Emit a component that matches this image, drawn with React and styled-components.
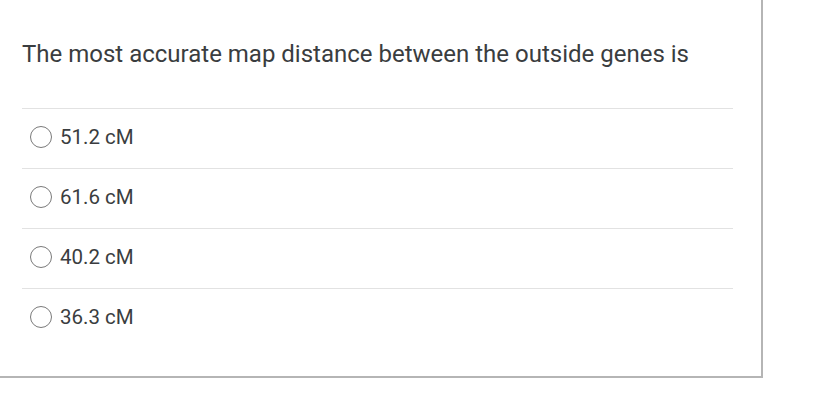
import styled, { createGlobalStyle } from "styled-components";

const GlobalStyle = createGlobalStyle`
  html, body {
    margin: 0;
    padding: 0;
    background: #ffffff;
  }
  body {
    font-family: Roboto, "Liberation Sans", Arial, sans-serif;
  }
`;

const Panel = styled.div`
  box-sizing: border-box;
  width: 763px;
  height: 378px;
  padding: 39px 28px 0 22px;
  background: #ffffff;
  border-right: 2px solid #b5b5b5;
  border-bottom: 2px solid #b5b5b5;
`;

const Question = styled.div`
  font-size: 24px;
  line-height: 30px;
  color: #3a3d40;
  margin-bottom: 39px;
`;

const Options = styled.div`
  display: flex;
  flex-direction: column;
`;

const Option = styled.label`
  display: flex;
  align-items: center;
  gap: 8px;
  height: 60px;
  box-sizing: border-box;
  padding: 0 0 4px 8px;
  border-top: 1px solid #e2e2e2;
  font-size: 20.5px;
  color: #3a3d40;
  cursor: pointer;
`;

const Radio = styled.span`
  box-sizing: border-box;
  width: 22px;
  height: 22px;
  border-radius: 50%;
  border: 1.5px solid #7a7a7a;
  background: #ffffff;
  flex-shrink: 0;
`;

const choices = ["51.2 cM", "61.6 cM", "40.2 cM", "36.3 cM"];

export default function App() {
  return (
    <>
      <GlobalStyle />
      <Panel>
        <Question>The most accurate map distance between the outside genes is</Question>
        <Options>
          {choices.map((c) => (
            <Option key={c}>
              <Radio />
              {c}
            </Option>
          ))}
        </Options>
      </Panel>
    </>
  );
}
